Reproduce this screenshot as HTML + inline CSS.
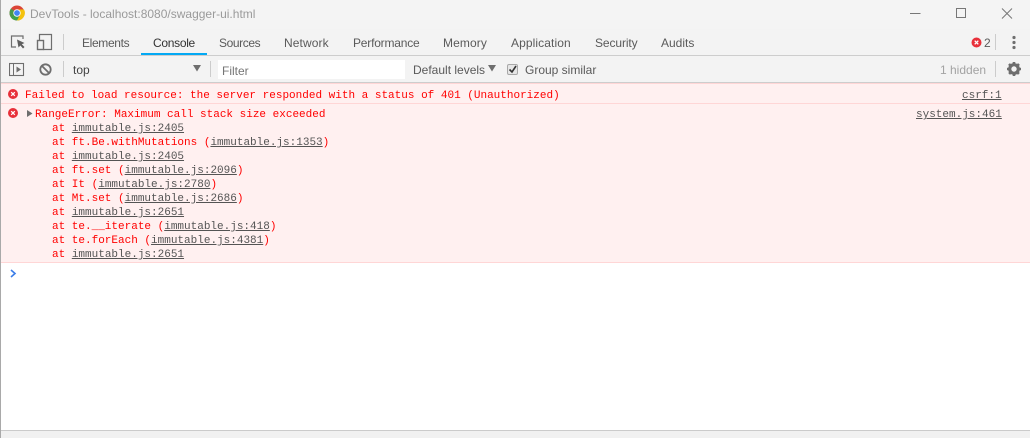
<!DOCTYPE html>
<html><head><meta charset="utf-8">
<style>
html,body{margin:0;padding:0;width:1030px;height:438px;overflow:hidden;background:#fff}
.a{position:absolute;white-space:pre}
.s{font-family:"Liberation Sans",sans-serif;font-size:12px;line-height:14px;color:#5a5a5a}
.m{font-family:"Liberation Mono",monospace;font-size:11px;line-height:14px;color:#f00}
.m u{color:#545454;text-decoration:underline}
.l{font-family:"Liberation Mono",monospace;font-size:11px;line-height:14px;color:#545454;text-decoration:underline}
.b{position:absolute}
</style></head>
<body>
<div class="b" style="left:0;top:0;width:1030px;height:29px;background:#f4f4f4"></div>
<div class="b" style="left:0;top:29px;width:1030px;height:26px;background:#f3f3f3"></div>
<div class="b" style="left:0;top:55px;width:1030px;height:1px;background:#cdcdcd"></div>
<div class="b" style="left:0;top:56px;width:1030px;height:26px;background:#f3f3f3"></div>
<div class="b" style="left:0;top:82px;width:1030px;height:1px;background:#cdcdcd"></div>
<div class="b" style="left:0;top:83px;width:1030px;height:180px;background:#fff0f0"></div>
<div class="b" style="left:0;top:83px;width:1030px;height:1px;background:#ffd6d6"></div>
<div class="b" style="left:0;top:103px;width:1030px;height:1px;background:#ffd6d6"></div>
<div class="b" style="left:0;top:262px;width:1030px;height:1px;background:#ffd6d6"></div>
<div class="b" style="left:0;top:430px;width:1030px;height:1px;background:#cbcbcb"></div>
<div class="b" style="left:0;top:431px;width:1030px;height:7px;background:#f1f1f1"></div>
<div class="b" style="left:0;top:0;width:1px;height:438px;background:#a9a9a9"></div>

<svg class="b" style="left:9px;top:5px" width="16" height="16" viewBox="0 0 16 16">
<circle cx="8" cy="8" r="7.5" fill="#db4437"/>
<path d="M8 8 L1.500 11.800 A7.500 7.500 0 0 1 2 3.500 L8 8Z" fill="#4a9a4a"/>
<path d="M8 8 L1.500 11.700 A7.500 7.500 0 0 0 8 15.500 A7.500 7.500 0 0 0 11 15 Z" fill="#3fa34d"/>
<path d="M8 4.500 L15 4.500 A7.500 7.500 0 0 1 8 15.500 L11 10Z" fill="#f4c20d"/>
<circle cx="8" cy="8" r="3.700" fill="#fff"/><circle cx="8" cy="8" r="2.900" fill="#4285f4"/>
</svg>
<div class="a s" style="left:30px;top:7px;color:#9a9a9a">DevTools - localhost:8080/swagger-ui.html</div>

<svg class="b" style="left:900px;top:0" width="130" height="29" viewBox="0 0 130 29" fill="none" stroke="#777" stroke-width="1">
<path d="M10 13.500H20.500"/>
<rect x="56.500" y="8.500" width="9" height="9"/>
<path d="M102 8.500L112 18.500M112 8.500L102 18.500"/>
</svg>

<svg class="b" style="left:10px;top:33px" width="44" height="18" viewBox="0 0 44 18" fill="none" stroke="#6e6e6e" stroke-width="1.200">
<path d="M6 14H1.500V3H13V6"/>
<path d="M7 6.500L14.500 10L11.800 11.200L14.500 14L13 15.500L10.400 12.500L8.500 14.500Z" fill="#5f5f5f" stroke="none"/>
<rect x="27.500" y="7.500" width="6" height="9" stroke-width="1.400"/>
<path d="M29.500 7V1.500H41.500V16.500H33.500"/>
</svg>
<div class="b" style="left:63px;top:34px;width:1px;height:16px;background:#ccc"></div>
<div class="a s" style="left:82px;top:36px;letter-spacing:-.35px">Elements</div>
<div class="a s" style="left:153px;top:36px;color:#333;letter-spacing:-.3px">Console</div>
<div class="b" style="left:141px;top:53px;width:66px;height:2px;background:#03a9f4"></div>
<div class="a s" style="left:219px;top:36px;letter-spacing:-.4px">Sources</div>
<div class="a s" style="left:284px;top:36px;letter-spacing:.1px">Network</div>
<div class="a s" style="left:353px;top:36px;letter-spacing:-.2px">Performance</div>
<div class="a s" style="left:443px;top:36px;letter-spacing:.1px">Memory</div>
<div class="a s" style="left:511px;top:36px;letter-spacing:.1px">Application</div>
<div class="a s" style="left:595px;top:36px;letter-spacing:-.1px">Security</div>
<div class="a s" style="left:661px;top:36px">Audits</div>

<svg class="b" style="left:971px;top:37px" width="11" height="11" viewBox="0 0 11 11"><circle cx="5.500" cy="5.500" r="5" fill="#e8303a"/><path d="M3.700 3.700L7.300 7.300M7.300 3.700L3.700 7.300" stroke="#fff" stroke-width="1.300"/></svg>
<div class="a s" style="left:984px;top:36px">2</div>
<div class="b" style="left:995px;top:34px;width:1px;height:16px;background:#ccc"></div>
<svg class="b" style="left:1010px;top:35px" width="7" height="15" viewBox="0 0 7 15" fill="#6e6e6e"><circle cx="4" cy="2.500" r="1.600"/><circle cx="4" cy="7.500" r="1.600"/><circle cx="4" cy="12.500" r="1.600"/></svg>

<svg class="b" style="left:9px;top:62px" width="45" height="15" viewBox="0 0 45 15" fill="none" stroke="#6e6e6e">
<rect x="0.500" y="1.500" width="14" height="12" stroke-width="1.100"/>
<path d="M4.500 2V13" stroke-width="1"/>
<path d="M7.500 4.500L12 7.500L7.500 10.500Z" fill="#6e6e6e" stroke="none"/>
<circle cx="36.500" cy="7.500" r="5.200" stroke-width="1.800"/>
<path d="M33 4L40 11" stroke-width="1.800"/>
</svg>
<div class="b" style="left:63px;top:61px;width:1px;height:16px;background:#ccc"></div>
<div class="a s" style="left:73px;top:63px;color:#444">top</div>
<svg class="b" style="left:193px;top:65px" width="9" height="7"><path d="M0 0H8L4 6.500Z" fill="#6e6e6e"/></svg>
<div class="b" style="left:210px;top:61px;width:1px;height:16px;background:#ccc"></div>
<div class="b" style="left:218px;top:60px;width:187px;height:19px;background:#fff"></div>
<div class="a s" style="left:222px;top:64px;color:#757575">Filter</div>
<div class="a s" style="left:413px;top:63px">Default levels</div>
<svg class="b" style="left:488px;top:65px" width="9" height="7"><path d="M0 0H8L4 6.500Z" fill="#6e6e6e"/></svg>
<div class="b" style="left:507px;top:64px;width:9px;height:9px;background:#e6e6e6;border:1px solid #a8a8a8;border-radius:2px"></div>
<svg class="b" style="left:507px;top:63px" width="12" height="12"><path d="M2.500 6.500L5 9L9 3" fill="none" stroke="#333" stroke-width="1.600"/></svg>
<div class="a s" style="left:525px;top:63px">Group similar</div>
<div class="a s" style="left:940px;top:63px;color:#a3a3a3">1 hidden</div>
<div class="b" style="left:995px;top:61px;width:1px;height:16px;background:#ccc"></div>
<svg class="b" style="left:1006px;top:61px" width="16" height="16" viewBox="0 0 16 16">
<circle cx="8" cy="8" r="4.300" fill="none" stroke="#6e6e6e" stroke-width="3.200"/>
<path d="M8 1V15M1 8H15M3 3L13 13M13 3L3 13" stroke="#6e6e6e" stroke-width="2.600" stroke-dasharray="3 8 3"/>
</svg>

<svg class="b" style="left:8px;top:89px" width="11" height="11" viewBox="0 0 11 11"><circle cx="5" cy="5" r="5" fill="#e8303a"/><path d="M3.200 3.200L6.800 6.800M6.800 3.200L3.200 6.800" stroke="#fff" stroke-width="1.300"/></svg>
<div class="a m" style="left:25px;top:89px">Failed to load resource: the server responded with a status of 401 (Unauthorized)</div>
<div class="a l" style="left:962px;top:89px">csrf:1</div>

<svg class="b" style="left:8px;top:108px" width="11" height="11" viewBox="0 0 11 11"><circle cx="5" cy="5" r="5" fill="#e8303a"/><path d="M3.200 3.200L6.800 6.800M6.800 3.200L3.200 6.800" stroke="#fff" stroke-width="1.300"/></svg>
<svg class="b" style="left:27px;top:110px" width="6" height="8"><path d="M0 0L5.500 3.500L0 7Z" fill="#6e6e6e"/></svg>
<div class="a m" style="left:35px;top:108px">RangeError: Maximum call stack size exceeded</div>
<div class="a l" style="left:916px;top:108px">system.js:461</div>
<div class="a m" style="left:52px;top:122px">at <u>immutable.js:2405</u>
at ft.Be.withMutations (<u>immutable.js:1353</u>)
at <u>immutable.js:2405</u>
at ft.set (<u>immutable.js:2096</u>)
at It (<u>immutable.js:2780</u>)
at Mt.set (<u>immutable.js:2686</u>)
at <u>immutable.js:2651</u>
at te.__iterate (<u>immutable.js:418</u>)
at te.forEach (<u>immutable.js:4381</u>)
at <u>immutable.js:2651</u></div>

<svg class="b" style="left:10px;top:269px" width="7" height="9" viewBox="0 0 7 9"><path d="M1 1L5 4.500L1 8" fill="none" stroke="#3b7de8" stroke-width="1.600"/></svg>
</body></html>
